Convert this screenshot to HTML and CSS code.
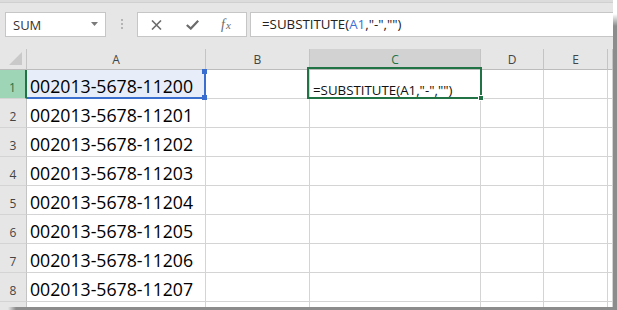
FILE: index.html
```html
<!DOCTYPE html>
<html>
<head>
<meta charset="utf-8">
<link rel="stylesheet" href="styles.css">
</head>
<body>
<div class="frame">
  <div class="topstrip"></div>
  <div class="toolbar">
    <div class="namebox">
      <span class="name">SUM</span>
      <svg class="caret" width="7" height="4" viewBox="0 0 7 4"><path d="M0 0h7L3.5 4z" fill="#7a7a7a"/></svg>
    </div>
    <svg class="grip" width="2" height="12" viewBox="0 0 2 12"><rect x="0" y="0" width="2" height="2" fill="#b4b4b4"/><rect x="0" y="4" width="2" height="2" fill="#b4b4b4"/><rect x="0" y="8" width="2" height="2" fill="#b4b4b4"/></svg>
    <div class="fxbox">
      <svg class="ico" width="11" height="10" viewBox="0 0 11 10"><path d="M1 0.5l9 9M10 0.5l-9 9" stroke="#6b6b6b" stroke-width="1.6" fill="none"/></svg>
      <svg class="ico" width="13" height="10" viewBox="0 0 13 10"><path d="M0.8 5l4 3.6L12.2 0.8" stroke="#6b6b6b" stroke-width="2.2" fill="none"/></svg>
      <span class="fx"><i>f</i><i class="x">x</i></span>
    </div>
    <div class="formula">=SUBSTITUTE(<span class="ref">A1</span>,"-","")</div>
  </div>
  <div class="grid">
    <div class="corner"><svg width="13" height="13" viewBox="0 0 13 13"><path d="M13 0V13H0z" fill="#c9c9c9"/></svg></div>
    <div class="ch">A</div>
    <div class="ch">B</div>
    <div class="ch active">C</div>
    <div class="ch">D</div>
    <div class="ch">E</div>
    <div class="ch"></div>

    <div class="rh sel">1</div><div class="c a1">002013-5678-11200</div><div class="c"></div><div class="c c1">=SUBSTITUTE(A1,"-","")</div><div class="c"></div><div class="c"></div><div class="c"></div>
    <div class="rh">2</div><div class="c">002013-5678-11201</div><div class="c"></div><div class="c"></div><div class="c"></div><div class="c"></div><div class="c"></div>
    <div class="rh">3</div><div class="c">002013-5678-11202</div><div class="c"></div><div class="c"></div><div class="c"></div><div class="c"></div><div class="c"></div>
    <div class="rh">4</div><div class="c">002013-5678-11203</div><div class="c"></div><div class="c"></div><div class="c"></div><div class="c"></div><div class="c"></div>
    <div class="rh">5</div><div class="c">002013-5678-11204</div><div class="c"></div><div class="c"></div><div class="c"></div><div class="c"></div><div class="c"></div>
    <div class="rh">6</div><div class="c">002013-5678-11205</div><div class="c"></div><div class="c"></div><div class="c"></div><div class="c"></div><div class="c"></div>
    <div class="rh">7</div><div class="c">002013-5678-11206</div><div class="c"></div><div class="c"></div><div class="c"></div><div class="c"></div><div class="c"></div>
    <div class="rh">8</div><div class="c">002013-5678-11207</div><div class="c"></div><div class="c"></div><div class="c"></div><div class="c"></div><div class="c"></div>
    <div class="rh last"></div><div class="c last"></div><div class="c last"></div><div class="c last"></div><div class="c last"></div><div class="c last"></div><div class="c last"></div>
  </div>
  <div class="cursor"><span class="handle"></span></div>
</div>
</body>
</html>
```
FILE: styles.css
```css
* { box-sizing: border-box; }
html, body { margin: 0; padding: 0; background: #fff; }
body { width: 617px; height: 310px; position: relative; overflow: hidden; }

.frame {
  position: relative;
  width: 613px;
  height: 307px;
  background: #fff;
  font-family: "Open Sans", "Liberation Sans", sans-serif;
}
.frame::after {
  content: "";
  position: absolute;
  left: 613px;
  top: 14px;
  width: 4px;
  height: 296px;
  background: linear-gradient(to bottom, rgba(140,140,140,0) 0, #8c8c8c 12px);
}
.frame::before {
  content: "";
  position: absolute;
  left: 8px;
  top: 307px;
  width: 605px;
  height: 3px;
  background: linear-gradient(to right, rgba(140,140,140,0) 0, #8c8c8c 8px);
}

.topstrip {
  height: 3px;
  background: #dcdcdc;
  border-bottom: 1px solid #d0d0d0;
}
.toolbar {
  height: 46px;
  background: #e6e6e6;
  display: flex;
  align-items: flex-start;
  padding: 9px 0 0 5px;
}
.namebox {
  width: 101px;
  height: 25px;
  background: #fff;
  border: 1px solid #c6c6c6;
  display: flex;
  align-items: center;
  justify-content: space-between;
  padding: 0 7px 0 7px;
}
.name { font-size: 13px; color: #333; }
.caret { margin-bottom: 1px; }
.grip { margin: 7px 0 0 15px; }
.fxbox {
  margin-left: 14px;
  width: 110px;
  height: 25px;
  background: #fff;
  border: 1px solid #c6c6c6;
  display: flex;
  align-items: center;
  padding: 0 0 0 13px;
  gap: 24px;
}
.fxbox .ico:nth-child(2) { margin-left: 0; }
.fx {
  font-family: "Liberation Serif", serif;
  font-size: 14px;
  color: #6b6b6b;
  margin-left: -2px;
}
.fx i { font-style: italic; }
.fx .x { font-size: 11px; margin-left: 1px; }
.formula {
  margin-left: 3px;
  flex: 1;
  height: 25px;
  background: #fff;
  border: 1px solid #c6c6c6;
  border-right: none;
  font-size: 13.3px;
  line-height: 23px;
  padding-left: 11px;
  color: #222;
  white-space: nowrap;
}
.ref { color: #3d6fd6; }

.grid {
  display: grid;
  grid-template-columns: 27px 179px 104px 171px 63px 64px 1fr;
  grid-template-rows: 21px repeat(8, 29px) 1fr;
  height: 258px;
}
.corner {
  background: #e6e6e6;
  border-right: 1px solid #c4c4c4;
  border-bottom: 1px solid #bcbcbc;
  display: flex;
  align-items: flex-end;
  justify-content: flex-end;
  padding: 0 4px 4px 0;
}
.ch {
  background: #e6e6e6;
  border-right: 1px solid #c4c4c4;
  border-bottom: 1px solid #bcbcbc;
  font-size: 12px;
  color: #444;
  text-align: center;
  line-height: 19px;
  padding-top: 1px;
}
.ch.active { background: #d2d2d2; color: #217346; }
.rh {
  background: #e6e6e6;
  border-right: 1px solid #c4c4c4;
  border-bottom: 1px solid #d4d4d4;
  font-size: 12px;
  color: #444;
  text-align: center;
  padding-top: 10px;
  line-height: 16px;
}
.rh.sel {
  background: #9fd5b7;
  color: #217346;
  border-right: 2px solid #217346;
  padding-right: 0;
}
.c {
  border-right: 1px solid #d4d4d4;
  border-bottom: 1px solid #d4d4d4;
  font-size: 17.7px;
  color: #000;
  line-height: 18px;
  padding: 7px 0 0 3px;
  white-space: nowrap;
}
.last { border-bottom: none; }
.a1 {
  position: relative;
  background: #e8eef9;
  border-right: 2px solid #3a6fd0;
  border-bottom: 2px solid #3a6fd0;
}
.a1::before, .a1::after {
  content: "";
  position: absolute;
  width: 5px;
  height: 5px;
  background: #3a6fd0;
  right: -3px;
}
.a1::before { top: -1px; }
.a1::after { bottom: -3px; }
.c1 {
  font-size: 13.3px;
  color: #111;
  padding: 11px 0 0 3px;
}
.cursor {
  position: absolute;
  left: 307px;
  top: 67px;
  width: 175px;
  height: 32px;
  border: 2px solid #217346;
}
.handle {
  position: absolute;
  right: -4px;
  bottom: -4px;
  width: 6px;
  height: 6px;
  background: #217346;
  border: 1px solid #fff;
}
```
